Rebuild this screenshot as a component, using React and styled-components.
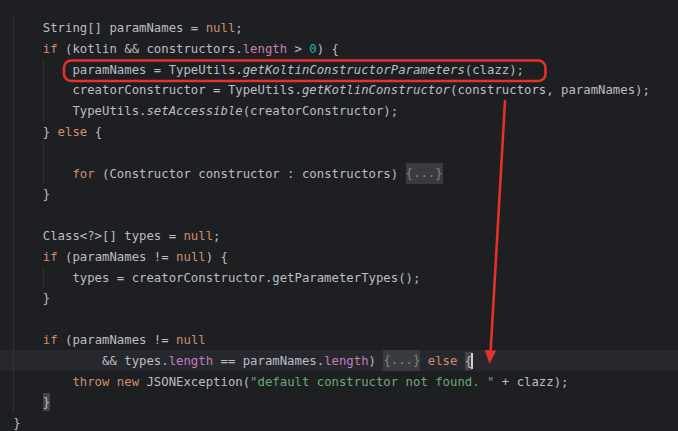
import React from "react";
import styled, { createGlobalStyle, css } from "styled-components";

const Global = createGlobalStyle`
  html, body { margin: 0; padding: 0; background: #1e1f22; }
  body { width: 678px; height: 431px; overflow: hidden; }
`;

const Editor = styled.div`
  position: relative;
  width: 678px;
  height: 431px;
  overflow: hidden;
  background: #1e1f22;
  padding-top: 17.6px;
  box-sizing: border-box;
  font-family: "DejaVu Sans Mono", "Liberation Mono", monospace;
  font-size: 12.3px;
  color: #bcbec4;
`;

const Line = styled.div`
  display: flex;
  align-items: center;
  height: 20.8px;
  padding-left: 13.2px;
  white-space: pre;
  background: ${(p) => (p.$current ? "#26282e" : "transparent")};
`;

const Indent = styled.span`
  display: inline-block;
  flex: none;
  width: 4ch;
  height: 20.8px;
  box-sizing: border-box;
  border-left: 1px solid ${(p) => (p.$guide ? "#303236" : "transparent")};
`;

const Space = styled.span`
  display: inline-block;
  flex: none;
  width: ${(p) => p.$n}ch;
`;

const tokenStyles = {
  d: css`color: #bcbec4;`,
  k: css`color: #cf8e6d;`,
  f: css`color: #c77dbb;`,
  n: css`color: #2aacb8;`,
  s: css`color: #6aab73;`,
  i: css`color: #bcbec4; font-style: italic;`,
  fold: css`
    color: #7f838a;
    background: #393b40;
    height: 20.8px;
    line-height: 20.8px;
  `,
  brace: css`
    color: #bcbec4;
    background: #43454a;
    height: 18px;
    line-height: 18px;
  `,
};

const Tok = styled.span`
  display: inline-block;
  ${(p) => tokenStyles[p.$t]}
`;

const Caret = styled.span`
  display: inline-block;
  width: 0;
  height: 16px;
  border-left: 2px solid #ced0d6;
  margin-left: -1px;
`;

const Overlay = styled.svg`
  position: absolute;
  left: 0;
  top: 0;
  pointer-events: none;
`;

const lines = [
  { l: 1, g: [1], t: [["d", "String[] paramNames = "], ["k", "null"], ["d", ";"]] },
  {
    l: 1,
    g: [1],
    t: [["k", "if"], ["d", " (kotlin && constructors."], ["f", "length"], ["d", " > "], ["n", "0"], ["d", ") {"]],
  },
  {
    l: 2,
    g: [1, 1],
    t: [["d", "paramNames = TypeUtils."], ["i", "getKoltinConstructorParameters"], ["d", "(clazz);"]],
  },
  {
    l: 2,
    g: [1, 1],
    t: [["d", "creatorConstructor = TypeUtils."], ["i", "getKotlinConstructor"], ["d", "(constructors, paramNames);"]],
  },
  { l: 2, g: [1, 1], t: [["d", "TypeUtils."], ["i", "setAccessible"], ["d", "(creatorConstructor);"]] },
  { l: 1, g: [1], t: [["d", "} "], ["k", "else"], ["d", " {"]] },
  { l: 2, g: [1, 1], t: [] },
  {
    l: 2,
    g: [1, 1],
    t: [["k", "for"], ["d", " (Constructor constructor : constructors) "], ["fold", "{...}"]],
  },
  { l: 1, g: [1], t: [["d", "}"]] },
  { l: 1, g: [1], t: [] },
  { l: 1, g: [1], t: [["d", "Class<?>[] types = "], ["k", "null"], ["d", ";"]] },
  { l: 1, g: [1], t: [["k", "if"], ["d", " (paramNames != "], ["k", "null"], ["d", ") {"]] },
  { l: 2, g: [1, 1], t: [["d", "types = creatorConstructor.getParameterTypes();"]] },
  { l: 1, g: [1], t: [["d", "}"]] },
  { l: 1, g: [1], t: [] },
  { l: 1, g: [1], t: [["k", "if"], ["d", " (paramNames != "], ["k", "null"]] },
  {
    l: 1,
    g: [1],
    sp: 8,
    cur: true,
    t: [
      ["d", "&& types."],
      ["f", "length"],
      ["d", " == paramNames."],
      ["f", "length"],
      ["d", ") "],
      ["fold", "{...}"],
      ["d", " "],
      ["k", "else"],
      ["d", " "],
      ["brace", "{"],
      ["caret"],
    ],
  },
  {
    l: 2,
    g: [1, 0],
    t: [
      ["k", "throw new"],
      ["d", " JSONException("],
      ["s", "\"default constructor not found. \""],
      ["d", " + clazz);"],
    ],
  },
  { l: 1, g: [1], t: [["brace", "}"]] },
  { l: 0, g: [], t: [["d", "}"]] },
];

function CodeLine({ line }) {
  const indents = [];
  for (let i = 0; i < line.l; i++) {
    indents.push(<Indent key={"i" + i} $guide={!!line.g[i]} />);
  }
  return (
    <Line $current={line.cur}>
      {indents}
      {line.sp ? <Space $n={line.sp} /> : null}
      {line.t.map(([type, text], idx) =>
        type === "caret" ? <Caret key={idx} /> : (
          <Tok key={idx} $t={type}>
            {text}
          </Tok>
        )
      )}
    </Line>
  );
}

export default function App() {
  const red = "#e3312b";
  return (
    <>
      <Global />
      <Editor>
        {lines.map((line, i) => (
          <CodeLine key={i} line={line} />
        ))}
        <Overlay width="678" height="431" viewBox="0 0 678 431">
          <rect x="64" y="60.5" width="481.5" height="20.5" rx="7" ry="7" fill="none" stroke={red} strokeWidth="2.6" />
          <line x1="505" y1="101" x2="490.6" y2="352" stroke={red} strokeWidth="2.6" strokeLinecap="round" />
          <polygon points="489.6,364 496.2,350.6 484.6,350" fill={red} />
        </Overlay>
      </Editor>
    </>
  );
}
